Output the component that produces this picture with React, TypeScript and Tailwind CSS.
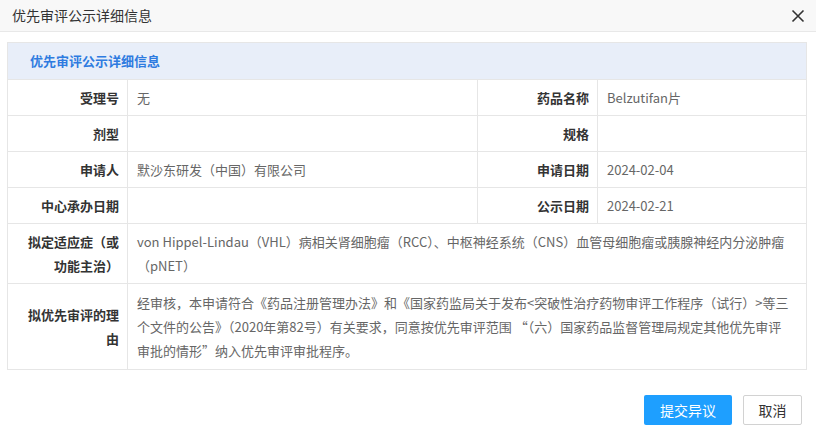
import React from 'react';

const font = { fontFamily: '"Microsoft YaHei", "Noto Sans CJK SC", "Noto Sans", sans-serif' };

type Cell = { label: React.ReactNode; value?: React.ReactNode };

const Label: React.FC<{ children: React.ReactNode }> = ({ children }) => (
  <td className="border border-[#e6e6e6] px-2 py-[3px] text-right align-middle font-bold text-[#333] leading-[24px]">
    {children}
  </td>
);

const Value: React.FC<{ children?: React.ReactNode; colSpan?: number }> = ({ children, colSpan }) => (
  <td
    colSpan={colSpan}
    className="border border-[#e6e6e6] pl-[9px] pr-2 py-[3px] align-middle text-[#666] leading-[24px]"
  >
    {children}
  </td>
);

const pairs: [Cell, Cell][] = [
  [{ label: '受理号', value: '无' }, { label: '药品名称', value: 'Belzutifan片' }],
  [{ label: '剂型' }, { label: '规格' }],
  [{ label: '申请人', value: '默沙东研发（中国）有限公司' }, { label: '申请日期', value: '2024-02-04' }],
  [{ label: '中心承办日期' }, { label: '公示日期', value: '2024-02-21' }],
];

export default function App() {
  return (
    <div className="w-[816px] h-[431px] bg-white flex flex-col overflow-hidden text-[13px]" style={font}>
      <div className="h-[32px] shrink-0 bg-[#f8f8f8] border-b border-[#e8e8e8] flex items-center justify-between pl-[12px] pr-[11px]">
        <span className="text-[14px] text-[#333]">优先审评公示详细信息</span>
        <svg width="14" height="14" viewBox="0 0 14 14" className="text-[#333]">
          <path d="M1.5 1.5 L12.5 12.5 M12.5 1.5 L1.5 12.5" stroke="currentColor" strokeWidth="1.6" fill="none" />
        </svg>
      </div>

      <div className="pt-[10px] pl-[7px] pr-[10px]">
        <table className="w-[799px] table-fixed border-collapse">
          <colgroup>
            <col className="w-[120px]" />
            <col className="w-[350px]" />
            <col className="w-[120px]" />
            <col className="w-[209px]" />
          </colgroup>
          <tbody>
            <tr className="h-[37px]">
              <td colSpan={4} className="border border-[#e6e6e6] bg-[#e8eef9] pl-[22px] font-bold text-[#2e7be0]">
                优先审评公示详细信息
              </td>
            </tr>
            {pairs.map(([a, b], i) => (
              <tr key={i} className="h-[36px]">
                <Label>{a.label}</Label>
                <Value>{a.value}</Value>
                <Label>{b.label}</Label>
                <Value>{b.value}</Value>
              </tr>
            ))}
            <tr className="h-[60px]">
              <Label>
                拟定适应症（或
                <br />
                功能主治）
              </Label>
              <Value colSpan={3}>
                <span className="whitespace-nowrap">
                  von Hippel-Lindau（VHL）病相关肾细胞瘤（RCC）、中枢神经系统（CNS）血管母细胞瘤或胰腺神经内分泌肿瘤
                </span>
                <br />
                （pNET）
              </Value>
            </tr>
            <tr className="h-[86px]">
              <Label>
                拟优先审评的理
                <br />
                由
              </Label>
              <Value colSpan={3}>
                <span className="whitespace-nowrap">
                  经审核，本申请符合《药品注册管理办法》和《国家药监局关于发布&lt;突破性治疗药物审评工作程序（试行）&gt;等三
                </span>
                <br />
                <span className="whitespace-nowrap">
                  个文件的公告》（2020年第82号）有关要求，同意按优先审评范围 “（六）国家药品监督管理局规定其他优先审评
                </span>
                <br />
                审批的情形”纳入优先审评审批程序。
              </Value>
            </tr>
          </tbody>
        </table>
      </div>

      <div className="flex justify-end gap-[11px] pr-[14px] pt-[25px]">
        <button className="h-[30px] w-[88px] rounded-[2px] bg-[#1e9fff] text-white text-[14px]">提交异议</button>
        <button className="h-[30px] w-[59px] rounded-[2px] border border-[#d2d2d2] bg-white text-[#333] text-[14px]">
          取消
        </button>
      </div>
    </div>
  );
}
